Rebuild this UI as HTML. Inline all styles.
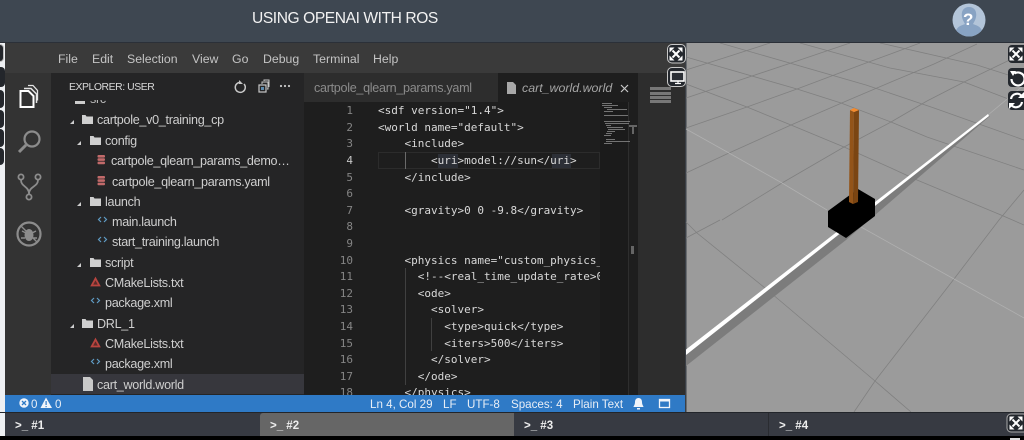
<!DOCTYPE html>
<html><head><meta charset="utf-8"><style>
html,body{margin:0;padding:0;width:1024px;height:440px;overflow:hidden;background:#000}
*{box-sizing:border-box}
.a{position:absolute}
#page{position:relative;width:1024px;height:440px;overflow:hidden;font-family:"Liberation Sans",sans-serif}
.t{position:absolute;white-space:pre;line-height:16px;filter:blur(.25px)}
.m{font-size:12.3px;color:#c4c4c4;top:51px}
.f{font-size:12.6px;letter-spacing:-.3px;color:#cfcfcf}
.c{font-family:"DejaVu Sans Mono",monospace;font-size:11px;color:#d8d8d8;left:378px}
.n{font-family:"DejaVu Sans Mono",monospace;font-size:11px;color:#858585;width:30px;text-align:right;left:323px}
.s{font-size:11.6px;color:#e8eef6;top:397px}
.k{font-size:11.5px;font-weight:bold;color:#eee;top:418px}
.g{position:absolute;width:1px;background:#404040}
</style></head><body><div id="page">
<div class="a" style="left:0;top:0;width:1024px;height:43px;background:#3e4751"></div>
<div class="a" style="left:0;top:42px;width:1024px;height:1px;background:#2b3038"></div>
<div class="t" style="left:252px;top:10px;font-size:15.6px;letter-spacing:-.43px;line-height:18px;color:#f2f2f2">USING OPENAI WITH ROS</div>
<svg class="a" style="left:952px;top:3px" width="34" height="34" viewBox="0 0 34 34"><defs><clipPath id="cc"><circle cx="17" cy="17" r="16.5"/></clipPath></defs><circle cx="17" cy="17" r="16.5" fill="#b3c5d9"/><g clip-path="url(#cc)"><path d="M17 4c6 0 8 5 7 10-.5 3-2 5-3 7 4 2 10 2 10 13H3c0-11 6-11 10-13-1-2-2.500-4-3-7C9 9 11 4 17 4z" fill="#88a3c3"/></g></svg>
<div class="t" style="left:963px;top:11px;font-size:17px;font-weight:bold;line-height:18px;color:#fff">?</div>

<!-- left strip -->
<div class="a" style="left:0;top:43px;width:5px;height:369px;background:#eef0f3"></div>
<div class="a" style="left:0;top:44px;width:4px;height:18px;background:#23262b;border-radius:0 4px 4px 0;border:1px solid #bbb;border-left:0"></div>
<div class="a" style="left:0;top:67px;width:5px;height:20px;background:#23262b;border-radius:0 4px 4px 0"></div>
<div class="a" style="left:0;top:90px;width:4px;height:18px;background:#23262b;border-radius:0 4px 4px 0"></div>
<div class="a" style="left:0;top:110px;width:4px;height:18px;background:#23262b;border-radius:0 4px 4px 0"></div>
<div class="a" style="left:0;top:129px;width:4px;height:18px;background:#23262b;border-radius:0 4px 4px 0"></div>
<div class="a" style="left:0;top:148px;width:4px;height:17px;background:#23262b;border-radius:0 4px 4px 0"></div>

<!-- vscode -->
<div class="a" style="left:5px;top:43px;width:680px;height:30px;background:#3a3a3a"></div>
<div class="a" style="left:5px;top:73px;width:46px;height:322px;background:#333"></div>
<div class="a" style="left:51px;top:73px;width:253px;height:322px;background:#252526"></div>
<div class="a" style="left:304px;top:73px;width:334px;height:322px;background:#1e1e1e"></div>
<div class="a" style="left:638px;top:73px;width:47px;height:322px;background:#2d2d2d"></div>
<div class="a" style="left:304px;top:73px;width:194px;height:29px;background:#2d2d2d"></div>
<div class="a" style="left:600px;top:102px;width:28px;height:293px;background:#1b1b1b"></div>
<div class="a" style="left:628px;top:102px;width:1px;height:293px;background:#2e2e2e"></div>
<div class="a" style="left:51px;top:374px;width:253px;height:20px;background:#37373d"></div>
<div class="a" style="left:378px;top:152px;width:222px;height:17px;border:1px solid #2c2c2c"></div>
<div class="a" style="left:438px;top:154px;width:20px;height:14px;background:#2c2f36"></div>
<div class="a" style="left:552px;top:154px;width:19px;height:14px;background:#2c2f36"></div>

<span class="t m" style="left:58px">File</span><span class="t m" style="left:92px">Edit</span><span class="t m" style="left:127px">Selection</span><span class="t m" style="left:192px">View</span><span class="t m" style="left:232px">Go</span><span class="t m" style="left:263px">Debug</span><span class="t m" style="left:313px">Terminal</span><span class="t m" style="left:373px">Help</span>

<!-- activity icons -->
<svg class="a" style="left:5px;top:73px" width="46" height="180" viewBox="0 0 46 180" fill="none">
<path d="M15.500 18h8l5 5v11h-13z" stroke="#fff" stroke-width="2"/><path d="M19 15.500h7l5.500 5.500v9" stroke="#e4e4e4" stroke-width="1.500"/><path d="M23 12.500h5l4.500 5v10" stroke="#e4e4e4" stroke-width="1.300"/>
<circle cx="27" cy="66" r="7.500" stroke="#8c8c8c" stroke-width="2.200"/><path d="M21 72l-7 7" stroke="#8c8c8c" stroke-width="3"/>
<g stroke="#8c8c8c" stroke-width="1.800"><circle cx="16" cy="104" r="2.600"/><circle cx="33" cy="104" r="2.600"/><circle cx="24" cy="124" r="2.600"/><path d="M16 107c0 7 8 6 8 14M33 107c0 7-9 6-9 14"/></g>
<circle cx="24" cy="161" r="11.500" stroke="#8c8c8c" stroke-width="2.200"/><ellipse cx="24" cy="162" rx="4.500" ry="6" fill="#8c8c8c"/><path d="M16 153l16 16M17 158l4 2M31 158l-4 2M16 165h4M32 165h-4" stroke="#8c8c8c" stroke-width="1.400"/>
</svg>

<!-- sidebar -->
<div class="t" style="left:69px;top:80px;font-size:10.4px;letter-spacing:-.42px;color:#d8d8d8">EXPLORER: USER</div>
<svg class="a" style="left:230px;top:78px" width="70" height="18" viewBox="0 0 70 18" fill="none"><path d="M14 6a5 5 0 1 1-3-1.600" stroke="#c8c8c8" stroke-width="1.500"/><path d="M9 2v4h4z" fill="#c8c8c8"/><rect x="29" y="7" width="7" height="7" stroke="#c8c8c8" stroke-width="1.200"/><path d="M32 6V4h6v7h-1M34 3V2h5v7" stroke="#c8c8c8"/><rect x="31" y="9" width="3" height="3" fill="#5b89ad"/><circle cx="51" cy="8" r="1.100" fill="#c8c8c8"/><circle cx="55" cy="8" r="1.100" fill="#c8c8c8"/><circle cx="59" cy="8" r="1.100" fill="#c8c8c8"/></svg>
<div class="a" style="left:51px;top:100px;width:253px;height:5px;overflow:hidden"><span class="t f" style="left:39px;top:-9px;color:#bbb">src</span><span class="a" style="left:24px;top:1px;width:10px;height:3px;background:#ccc"></span></div>

<svg class="a" style="left:60px;top:105px" width="100" height="290" viewBox="0 0 100 290">
<g fill="#cfcfcf"><path d="M14 15l-4 4H14zM21 36l-4 4H21zM21 97l-4 4H21zM21 158l-4 4H21zM14 219l-4 4H14z"/>
<path d="M22 10h3.500l1 1.500H33v7.500H22zM30 31h3.500l1 1.500H41v7.500H30zM30 92h3.500l1 1.500H41v7.500H30zM30 153h3.500l1 1.500H41v7.500H30zM22 214h3.500l1 1.500H33v7.500H22z"/>
<path d="M23 272h7l3 3v11H23z" fill="#c9c9c9"/></g>
<g fill="#c26a6a"><rect x="37.500" y="50" width="7.500" height="2.600" rx="1"/><rect x="37.500" y="53.300" width="7.500" height="2.600" rx="1"/><rect x="37.500" y="56.600" width="7.500" height="2.600" rx="1"/><rect x="37.500" y="71" width="7.500" height="2.600" rx="1"/><rect x="37.500" y="74.300" width="7.500" height="2.600" rx="1"/><rect x="37.500" y="77.600" width="7.500" height="2.600" rx="1"/></g>
<g stroke="#5f9cc5" stroke-width="1.200" fill="none"><path d="M41 112l-2.500 2.500 2.500 2.500M44 112l2.500 2.500-2.500 2.500M41 132l-2.500 2.500 2.500 2.500M44 132l2.500 2.500-2.500 2.500M34 193l-2.500 2.500 2.500 2.500M37 193l2.500 2.500-2.500 2.500M34 254l-2.500 2.500 2.500 2.500M37 254l2.500 2.500-2.500 2.500"/></g>
<path d="M35.500 173.500l3.800 7h-7.600zM35.500 234.500l3.800 7h-7.600z" fill="#5c2a28" stroke="#b8443f" stroke-width="1.800"/>
</svg>
<span class="t f" style="left:97px;top:112px">cartpole_v0_training_cp</span>
<span class="t f" style="left:105px;top:133px">config</span>
<span class="t f" style="left:111px;top:153px">cartpole_qlearn_params_demo…</span>
<span class="t f" style="left:112px;top:174px">cartpole_qlearn_params.yaml</span>
<span class="t f" style="left:105px;top:194px">launch</span>
<span class="t f" style="left:112px;top:214px">main.launch</span>
<span class="t f" style="left:112px;top:234px">start_training.launch</span>
<span class="t f" style="left:105px;top:255px">script</span>
<span class="t f" style="left:105px;top:275px">CMakeLists.txt</span>
<span class="t f" style="left:105px;top:295px">package.xml</span>
<span class="t f" style="left:97px;top:316px">DRL_1</span>
<span class="t f" style="left:105px;top:336px">CMakeLists.txt</span>
<span class="t f" style="left:105px;top:356px">package.xml</span>
<span class="t f" style="left:97px;top:377px">cart_world.world</span>

<!-- tabs -->
<span class="t" style="left:314px;top:80px;font-size:12.6px;letter-spacing:-.3px;color:#8b8b8b">cartpole_qlearn_params.yaml</span>
<svg class="a" style="left:506px;top:81px" width="11" height="14" viewBox="0 0 11 14"><path d="M1 1h6l3 3v9H1z" fill="#a8a8a8"/></svg>
<span class="t" style="left:522px;top:80px;font-size:12.4px;font-style:italic;color:#a5a5a5">cart_world.world</span>
<svg class="a" style="left:620px;top:84px" width="9" height="9" viewBox="0 0 9 9"><path d="M1 1l7 7M8 1l-7 7" stroke="#c8c8c8" stroke-width="1.200"/></svg>

<!-- code -->
<div class="g" style="left:405px;top:152px;height:17px;background:#6a6a6a"></div>
<div class="g" style="left:405px;top:268px;height:117px"></div>
<div class="g" style="left:431px;top:318px;height:33px"></div>
<div class="n t" style="top:103px">1</div><div class="c t" style="top:103px">&lt;sdf version="1.4"&gt;</div>
<div class="n t" style="top:120px">2</div><div class="c t" style="top:120px">&lt;world name="default"&gt;</div>
<div class="n t" style="top:136px">3</div><div class="c t" style="top:136px">    &lt;include&gt;</div>
<div class="n t" style="top:153px;color:#c6c6c6">4</div><div class="c t" style="top:153px">        &lt;uri&gt;model://sun&lt;/uri&gt;</div>
<div class="n t" style="top:170px">5</div><div class="c t" style="top:170px">    &lt;/include&gt;</div>
<div class="n t" style="top:186px">6</div>
<div class="n t" style="top:203px">7</div><div class="c t" style="top:203px">    &lt;gravity&gt;0 0 -9.8&lt;/gravity&gt;</div>
<div class="n t" style="top:219px">8</div>
<div class="n t" style="top:236px">9</div>
<div class="n t" style="top:253px">10</div><div class="c t" style="top:253px;width:222px;overflow:hidden">    &lt;physics name="custom_physics_world"&gt;</div>
<div class="n t" style="top:269px">11</div><div class="c t" style="top:269px;width:222px;overflow:hidden">      &lt;!--&lt;real_time_update_rate&gt;0</div>
<div class="n t" style="top:286px">12</div><div class="c t" style="top:286px">      &lt;ode&gt;</div>
<div class="n t" style="top:302px">13</div><div class="c t" style="top:302px">        &lt;solver&gt;</div>
<div class="n t" style="top:319px">14</div><div class="c t" style="top:319px">          &lt;type&gt;quick&lt;/type&gt;</div>
<div class="n t" style="top:336px">15</div><div class="c t" style="top:336px">          &lt;iters&gt;500&lt;/iters&gt;</div>
<div class="n t" style="top:352px">16</div><div class="c t" style="top:352px">        &lt;/solver&gt;</div>
<div class="n t" style="top:369px">17</div><div class="c t" style="top:369px">      &lt;/ode&gt;</div>
<div class="a" style="left:304px;top:385px;width:296px;height:10px;overflow:hidden"><div class="n t" style="top:0;left:19px">18</div><div class="c t" style="top:0;left:74px">    &lt;/physics&gt;</div></div>

<!-- minimap -->
<svg class="a" style="left:601px;top:102px" width="38" height="160" viewBox="0 0 38 160" fill="#8a8a8a" opacity=".8">
<rect x="1" y="1" width="10" height="1"/><rect x="1" y="3" width="16" height="1"/><rect x="3" y="5" width="8" height="1"/><rect x="6" y="7" width="20" height="1"/><rect x="3" y="9" width="9" height="1"/><rect x="3" y="13" width="24" height="1"/><rect x="3" y="19" width="26" height="1"/><rect x="4" y="21" width="24" height="1"/><rect x="5" y="23" width="5" height="1"/><rect x="6" y="25" width="16" height="1"/><rect x="7" y="27" width="17" height="1"/><rect x="6" y="29" width="8" height="1"/><rect x="5" y="31" width="6" height="1"/><rect x="3" y="33" width="7" height="1"/><rect x="5" y="37" width="9" height="1"/><rect x="5" y="39" width="24" height="1"/><rect x="3" y="41" width="8" height="1"/>
<path d="M28 23h8v2h-3v7h-2v-7h-3z" fill="#777"/><rect x="30" y="144" width="3" height="8" fill="#777"/></svg>

<!-- list icon -->
<div class="a" style="left:650px;top:87px;width:21px;height:3px;background:#777"></div>
<div class="a" style="left:650px;top:92px;width:21px;height:3px;background:#777"></div>
<div class="a" style="left:650px;top:96px;width:21px;height:3px;background:#777"></div>
<div class="a" style="left:650px;top:100px;width:21px;height:3px;background:#777"></div>

<!-- status -->
<div class="a" style="left:5px;top:395px;width:680px;height:17px;background:#2f7ac6"></div>
<svg class="a" style="left:18px;top:396px" width="36" height="14" viewBox="0 0 36 14"><circle cx="6" cy="7" r="4.700" fill="#f0f4fa"/><path d="M4 5l4 4M8 5l-4 4" stroke="#2f7ac6" stroke-width="1.300"/><path d="M28 1.500l6 10.500h-11.500z" fill="#f0f4fa"/><rect x="27.500" y="5" width="1.200" height="4" fill="#2f7ac6"/><rect x="27.500" y="10" width="1.200" height="1.200" fill="#2f7ac6"/></svg>
<span class="t s" style="left:31px">0</span><span class="t s" style="left:55px">0</span>
<span class="t s" style="left:370px">Ln 4, Col 29</span><span class="t s" style="left:443px">LF</span><span class="t s" style="left:467px">UTF-8</span><span class="t s" style="left:511px">Spaces: 4</span><span class="t s" style="left:573px">Plain Text</span>
<svg class="a" style="left:633px;top:397px" width="40" height="13" viewBox="0 0 40 13"><path d="M5.500 1c2.500 0 3.500 2 3.500 4 0 3 1.500 4 1.500 5h-10c0-1 1.500-2 1.500-5 0-2 1-4 3.500-4z" fill="#f0f4fa"/><rect x="4" y="11" width="3" height="1.500" fill="#f0f4fa"/><rect x="26.500" y="2.500" width="10" height="8" fill="none" stroke="#f0f4fa" stroke-width="1.300"/><rect x="26" y="2" width="11" height="2.500" fill="#f0f4fa"/></svg>

<!-- 3D -->
<svg class="a" style="left:685px;top:43px" width="339" height="369" viewBox="685 43 339 369">
<rect x="685" y="43" width="339" height="369" fill="#9b9b9b"/>
<rect x="685" y="43" width="1.500" height="369" fill="#3a3f46"/>
<g stroke="#808080" stroke-width=".8" fill="none">
<path d="M686 173L729 153 791 125 844 102 891 82 934 64 977 44"/>
<path d="M686 128L747 107 797 89 866 63 904 49 920 43"/>
<path d="M686 98L740 80 800 60 850 43"/>
<path d="M686 70L730 56 770 43"/>
<path d="M720 220L686 238"/>
<path d="M722 220L782 183 844 147 891 122 927 101 964 82 1024 53"/>
<path d="M854 412L875 381 954 279 999 220 1024 190"/>
<path d="M686 84L747 107 791 125 844 147 891 168 917 180 1001 215 1024 225"/>
<path d="M686 57L797 89 841 103 891 122 927 137 1024 170"/>
<path d="M720 43L866 85 934 108 1024 140"/>
<path d="M800 43L890 68 964 82 1024 105"/>
<path d="M880 43L977 65 1024 80"/>
<path d="M686 222L697 233 765 288 875 381 911 412"/>
</g>
<g stroke="#b0b0b0" stroke-width=".8" fill="none"><path d="M686 129L729 153 782 183 827 210M861 227L954 279 1024 318"/><path d="M988 115L1024 85"/></g>
<path d="M686 355L988 116 990 116 846 240 686 366z" fill="#7c7c7c"/>
<path d="M686 349.500L988 114 989 116 686 355z" fill="#fff"/>
<path d="M828 211L858 189 875 199 875 216 846 238 828 227z" fill="#000"/>
<path d="M850 110L854 112 853 204 849 202z" fill="#935419"/>
<path d="M854 112L859 110 858 202 853 204z" fill="#7b4512"/>
<path d="M850 110L854 108 859 110 854 112z" fill="#f58a2b"/>
</svg>

<!-- control buttons -->
<svg class="a" style="left:0;top:0;pointer-events:none" width="1024" height="440" viewBox="0 0 1024 440">
<defs><g id="ex"><path d="M-3.500 -3.500L3.500 3.500M3.500 -3.500L-3.500 3.500" stroke="#fff" stroke-width="2" fill="none"/><path d="M-6.500 -1.500V-6.500H-1.500zM6.500 -1.500V-6.500H1.500zM-6.500 1.500V6.500H-1.500zM6.500 1.500V6.500H1.500z" fill="#fff"/></g></defs>
<g><rect x="667.500" y="44.500" width="18" height="18.500" rx="4.500" fill="#23272d" stroke="#c8c8c8" stroke-width="1"/><use href="#ex" x="676" y="54"/>
<rect x="667.500" y="67.500" width="18" height="19" rx="4.500" fill="#23272d" stroke="#c8c8c8" stroke-width="1"/><rect x="671" y="72" width="13" height="9" fill="#2b2f36" stroke="#fff" stroke-width="1.600"/><path d="M675 83.500h6M678 81v2" stroke="#fff" stroke-width="1.200"/>
<rect x="1008" y="45" width="20" height="18" rx="4" fill="#23272d"/><use href="#ex" x="1016" y="54"/>
<rect x="1008" y="68" width="20" height="19" rx="4" fill="#23272d"/><path d="M1014.500 73.500a6.500 6.500 0 1 1-3 5.500" fill="none" stroke="#fff" stroke-width="2.200"/><path d="M1010 71l6 0-3 5z" fill="#fff"/>
<rect x="1008" y="91" width="20" height="19" rx="4" fill="#23272d"/><path d="M1011 99a6 6 0 0 1 11-2.500M1022 102a6 6 0 0 1-11 2.500" fill="none" stroke="#fff" stroke-width="2.200"/><path d="M1024 92v6h-6zM1009 109v-6h6z" fill="#fff"/></g>
</svg>

<!-- terminal tabs -->
<div class="a" style="left:0;top:412px;width:1024px;height:1px;background:#22252a"></div>
<div class="a" style="left:5px;top:413px;width:1019px;height:23px;background:#373a42"></div>
<div class="a" style="left:0;top:413px;width:5px;height:23px;background:#eef0f3"></div>
<div class="a" style="left:260px;top:413px;width:254px;height:23px;background:#666;border-radius:3px 0 0 0"></div>
<div class="a" style="left:768px;top:413px;width:1px;height:23px;background:#2a2c31"></div>
<div class="a" style="left:0;top:436px;width:1024px;height:4px;background:#000"></div>
<span class="t k" style="left:15px">&gt;_ #1</span><span class="t k" style="left:270px">&gt;_ #2</span><span class="t k" style="left:524px">&gt;_ #3</span><span class="t k" style="left:779px">&gt;_ #4</span>
<svg class="a" style="left:1006px;top:413px" width="18" height="20" viewBox="1006 413 18 20"><rect x="1007" y="414" width="20" height="18" rx="4" fill="#23272d" stroke="#aaa"/><use href="#ex" x="1016" y="423"/></svg>
<div class="a" style="left:1010px;top:438px;width:10px;height:2px;background:#ddd"></div>
</div></body></html>
